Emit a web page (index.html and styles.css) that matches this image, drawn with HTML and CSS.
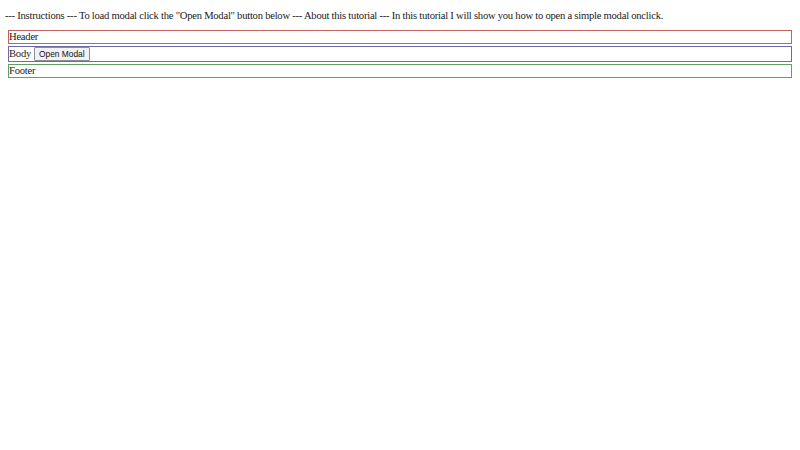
FILE: index.html
```html
<!DOCTYPE html>
<html>
<head>
<meta charset="utf-8">
<link rel="stylesheet" href="styles.css">
</head>
<body>
<div class="intro">--- Instructions --- To load modal click the "Open Modal" button below --- About this tutorial --- In this tutorial I will show you how to open a simple modal onclick.</div>
<div class="stack">
  <div class="box header">Header</div>
  <div class="box body">Body <button class="btn">Open Modal</button></div>
  <div class="box footer">Footer</div>
</div>
</body>
</html>
```

FILE: styles.css
```css
html, body {
  margin: 0;
  padding: 0;
  background: #fff;
}
body {
  font-family: "Liberation Serif", "Times New Roman", serif;
  font-size: 10.6px;
  letter-spacing: -0.24px;
  color: #1a1a1a;
}
.intro {
  padding: 9px 0 0 5px;
  line-height: 13px;
}
.stack {
  display: flex;
  flex-direction: column;
  gap: 2px;
  margin: 8px 8px 0 8px;
}
.box {
  border: 1px solid;
  line-height: 12px;
  padding: 0;
  display: flex;
  align-items: center;
  gap: 3px;
}
.header { border-color: #c2625e; }
.body { border-color: #6d69aa; }
.footer { border-color: #62a062; }
.btn {
  font-family: "Liberation Sans", Arial, sans-serif;
  font-size: 8.4px;
  letter-spacing: 0;
  line-height: 12px;
  padding: 0 4px;
  margin: 0;
  background: #f2f2f2;
  border: 1px solid #8d8d9a;
  border-radius: 1px;
  color: #111;
}
```
